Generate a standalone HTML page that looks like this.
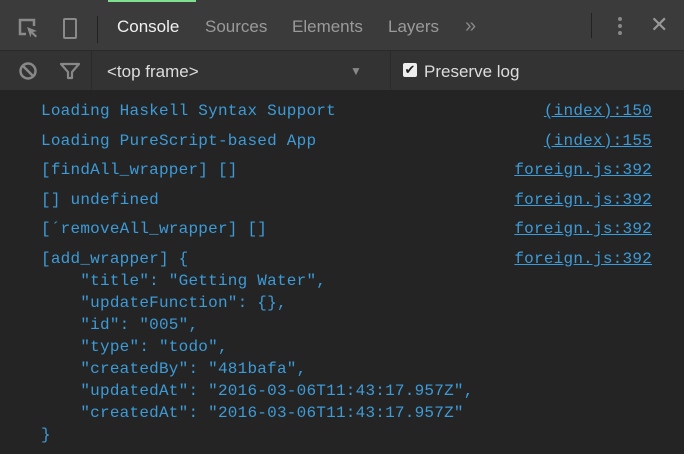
<!DOCTYPE html>
<html><head><style>
body{margin:0;width:684px;height:454px;background:#242424;overflow:hidden;font-family:"Liberation Sans",sans-serif;position:relative}
.tb{position:absolute;left:0;top:0;width:684px;height:50px;background:#3b3b3b;border-bottom:1px solid #2a2a2a}
.tb2{position:absolute;left:0;top:51px;width:684px;height:39px;background:#333}
.t{position:absolute;top:17px;font-size:17px;color:#9a9a9a}
.mono{position:absolute;font-family:"Liberation Mono",monospace;font-size:16px;letter-spacing:0.23px;color:#3d9bd8;white-space:pre}
.r{right:32px;text-decoration:underline}
</style></head><body>
<div class="tb">
<div style="position:absolute;left:108px;top:0;width:88px;height:2px;background:#7fe08f"></div>
<svg style="position:absolute;left:18px;top:18px" width="22" height="22" viewBox="0 0 22 22"><path d="M8 16H2V2h14v6" fill="none" stroke="#8a8a8a" stroke-width="2.5"/><path d="M9 9l10 4-4 1 4 4-1.5 1.5-4-4-1 4z" fill="#8a8a8a"/></svg>
<div style="position:absolute;left:63px;top:18px;width:10px;height:17px;border:2.5px solid #8a8a8a;border-radius:2px"></div>
<div style="position:absolute;left:97px;top:16px;width:1px;height:27px;background:#222"></div>
<div class="t" style="left:117px;color:#f0f0f0">Console</div>
<div class="t" style="left:205px">Sources</div>
<div class="t" style="left:292px">Elements</div>
<div class="t" style="left:388px">Layers</div>
<div class="t" style="left:465px;top:15px;font-size:20px;color:#888">»</div>
<div style="position:absolute;left:591px;top:13px;width:1px;height:25px;background:#222"></div>
<div style="position:absolute;left:618px;top:17px;width:4px;height:4px;border-radius:2px;background:#888;box-shadow:0 7px #888,0 14px #888"></div>
<div style="position:absolute;left:650px;top:12px;font-size:22px;color:#999">✕</div>
</div>
<div class="tb2">
<svg style="position:absolute;left:18px;top:10px" width="20" height="20" viewBox="0 0 20 20"><circle cx="10" cy="10" r="7.5" fill="none" stroke="#888" stroke-width="2.5"/><path d="M5 5l10 10" stroke="#888" stroke-width="2.5"/></svg>
<svg style="position:absolute;left:59px;top:11px" width="22" height="19" viewBox="0 0 22 19"><path d="M2 2h18l-7 8v6h-4v-6z" fill="none" stroke="#888" stroke-width="2.2" stroke-linejoin="round"/></svg>
<div style="position:absolute;left:91px;top:0;width:1px;height:39px;background:#2a2a2a"></div>
<div style="position:absolute;left:107px;top:11px;font-size:17px;color:#ddd">&lt;top frame&gt;</div>
<div style="position:absolute;left:350px;top:13px;font-size:12px;color:#888">▼</div>
<div style="position:absolute;left:390px;top:0;width:1px;height:39px;background:#2a2a2a"></div>
<div style="position:absolute;left:403px;top:12px;width:14px;height:14px;background:#eee;border-radius:2px;color:#222;font-size:13px;line-height:14px;text-align:center">✔</div>
<div style="position:absolute;left:424px;top:11px;font-size:17px;color:#ddd">Preserve log</div>
</div>
<div class="mono" style="left:41px;top:102px">Loading Haskell Syntax Support</div>
<div class="mono r" style="top:102px">(index):150</div>
<div class="mono" style="left:41px;top:132px">Loading PureScript-based App</div>
<div class="mono r" style="top:132px">(index):155</div>
<div class="mono" style="left:41px;top:161px">[findAll_wrapper] []</div>
<div class="mono r" style="top:161px">foreign.js:392</div>
<div class="mono" style="left:41px;top:191px">[] undefined</div>
<div class="mono r" style="top:191px">foreign.js:392</div>
<div class="mono" style="left:41px;top:220px">[´removeAll_wrapper] []</div>
<div class="mono r" style="top:220px">foreign.js:392</div>
<div class="mono r" style="top:250px">foreign.js:392</div>
<div class="mono" style="left:41px;top:248px;line-height:22px">[add_wrapper] {
    "title": "Getting Water",
    "updateFunction": {},
    "id": "005",
    "type": "todo",
    "createdBy": "481bafa",
    "updatedAt": "2016-03-06T11:43:17.957Z",
    "createdAt": "2016-03-06T11:43:17.957Z"
}</div>
</body></html>
